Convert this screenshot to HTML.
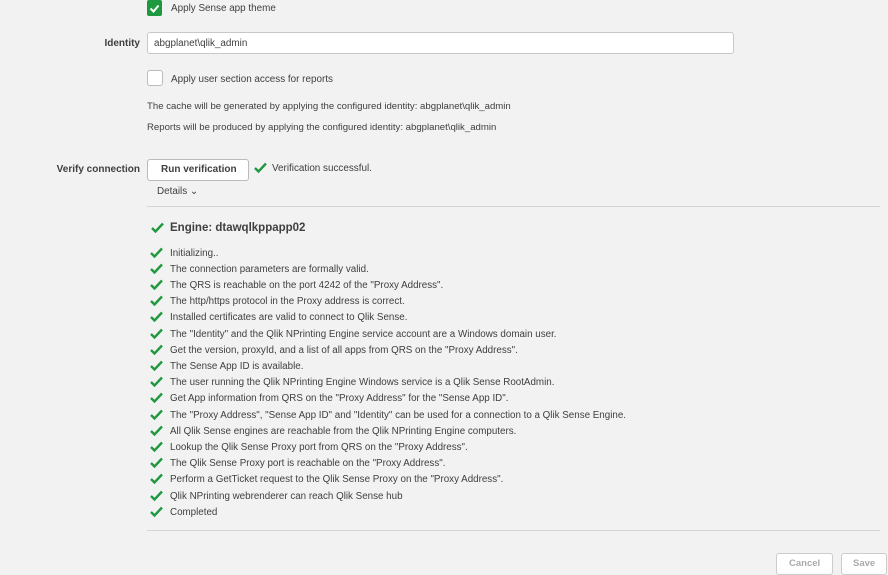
<!DOCTYPE html><html><head><style>
body{margin:0;width:888px;height:571px;overflow:hidden;background:#f2f2f2;font-family:"Liberation Sans",sans-serif;color:#404040;position:relative}
.a{position:absolute;white-space:nowrap}
.lbl{font-weight:bold;font-size:10px;color:#404040;text-align:right;right:748px}
.sm{font-size:9.9px;color:#404040}
.ck{position:absolute;width:13px;height:11px}
.btn{position:absolute;border:1px solid #bbb;border-radius:3px;background:#fff;box-sizing:border-box}
</style></head><body>
<div class="a" style="left:147px;top:0;width:15px;height:16px;background:#1f9940;border-radius:2px"><svg width="15" height="16"><path d="M3.5 8.5l3 3 5-6" stroke="#fff" stroke-width="2" fill="none"/></svg></div>
<div class="a sm" style="left:171px;top:3px">Apply Sense app theme</div>
<div class="a lbl" style="top:38px">Identity</div>
<div class="btn" style="left:147px;top:32px;width:587px;height:22px;border-color:#c8c8c8"></div>
<div class="a sm" style="left:154px;top:38px">abgplanet\qlik_admin</div>
<div class="btn" style="left:147px;top:70px;width:16px;height:16px;border-color:#bbb"></div>
<div class="a sm" style="left:171px;top:74px">Apply user section access for reports</div>
<div class="a" style="left:147px;top:101px;font-size:9.6px">The cache will be generated by applying the configured identity: abgplanet\qlik_admin</div>
<div class="a" style="left:147px;top:122px;font-size:9.6px">Reports will be produced by applying the configured identity: abgplanet\qlik_admin</div>
<div class="a lbl" style="top:164px">Verify connection</div>
<div class="btn" style="left:147px;top:159px;width:102px;height:22px"></div>
<div class="a" style="left:161px;top:164px;font-size:10px;font-weight:bold">Run verification</div>
<svg class="ck" style="left:254px;top:162px" viewBox="0 0 13 11"><path d="M1 6l3.5 3.5L12 1.5" stroke="#1f9940" stroke-width="2.4" fill="none"/></svg>
<div class="a sm" style="left:272px;top:163px">Verification successful.</div>
<div class="a sm" style="left:157px;top:186px">Details ⌄</div>
<div class="a" style="left:147px;top:206px;width:733px;height:1px;background:#d5d5d5"></div>
<svg class="ck" style="left:151px;top:222px" viewBox="0 0 13 11"><path d="M1 6l3.5 3.5L12 1.5" stroke="#1f9940" stroke-width="2.4" fill="none"/></svg>
<div class="a" style="left:170px;top:222px;font-size:11.5px;font-weight:bold">Engine: dtawqlkppapp02</div>
<div id="L"></div>
<div class="a" style="left:147px;top:530px;width:733px;height:1px;background:#d5d5d5"></div>
<div class="btn" style="left:776px;top:553px;width:57px;height:22px;border-color:#ccc"></div>
<div class="a" style="left:789px;top:558px;font-size:9.5px;font-weight:bold;color:#aaa">Cancel</div>
<div class="btn" style="left:841px;top:553px;width:46px;height:22px;border-color:#ccc"></div>
<div class="a" style="left:853px;top:558px;font-size:9.5px;font-weight:bold;color:#aaa">Save</div>
<script>
var t=["Initializing..","The connection parameters are formally valid.","The QRS is reachable on the port 4242 of the \"Proxy Address\".","The http/https protocol in the Proxy address is correct.","Installed certificates are valid to connect to Qlik Sense.","The \"Identity\" and the Qlik NPrinting Engine service account are a Windows domain user.","Get the version, proxyId, and a list of all apps from QRS on the \"Proxy Address\".","The Sense App ID is available.","The user running the Qlik NPrinting Engine Windows service is a Qlik Sense RootAdmin.","Get App information from QRS on the \"Proxy Address\" for the \"Sense App ID\".","The \"Proxy Address\", \"Sense App ID\" and \"Identity\" can be used for a connection to a Qlik Sense Engine.","All Qlik Sense engines are reachable from the Qlik NPrinting Engine computers.","Lookup the Qlik Sense Proxy port from QRS on the \"Proxy Address\".","The Qlik Sense Proxy port is reachable on the \"Proxy Address\".","Perform a GetTicket request to the Qlik Sense Proxy on the \"Proxy Address\".","Qlik NPrinting webrenderer can reach Qlik Sense hub","Completed"],h="";
t.forEach(function(s,i){var y=253+i*16.2;h+='<svg class="ck" style="left:150px;top:'+(y-6.5)+'px" viewBox="0 0 13 11"><path d="M1 6l3.5 3.5L12 1.5" stroke="#1f9940" stroke-width="2.4" fill="none"/></svg><div class="a" style="left:170px;top:'+(y-5.5)+'px;font-size:9.8px">'+s.replace(/"/g,"&quot;")+'</div>';});
document.getElementById("L").outerHTML=h;
</script>
</body></html>
